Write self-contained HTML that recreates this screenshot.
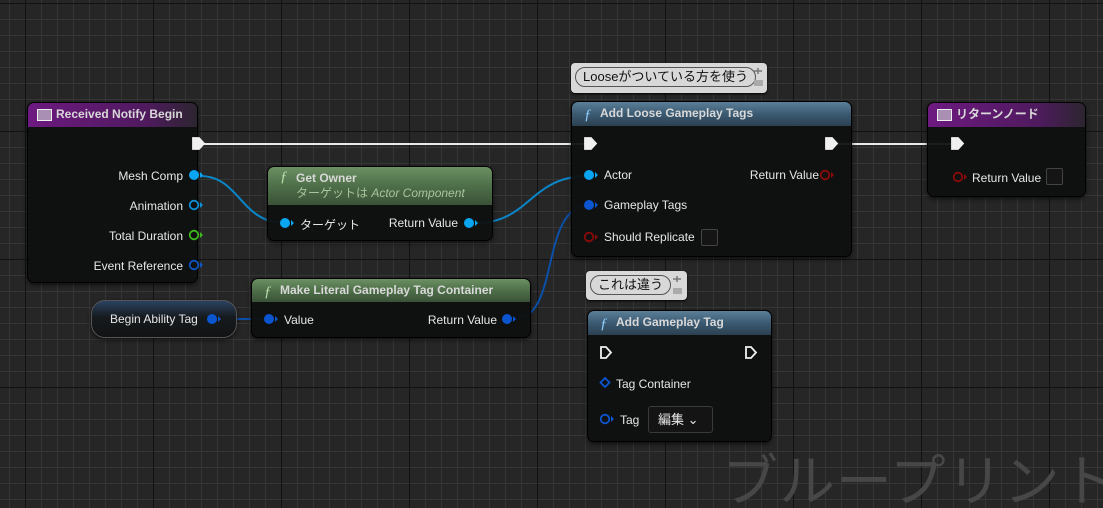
<!DOCTYPE html>
<html><head><meta charset="utf-8"><style>
*{margin:0;padding:0;box-sizing:border-box}
html{width:1103px;height:508px;overflow:hidden}
body{width:1103px;height:508px;overflow:hidden;position:relative;font-family:"Liberation Sans","Noto Sans CJK JP",sans-serif;font-size:12px;color:#e6e6e6;
background-color:#262626;
background-image:
linear-gradient(90deg,#121212 1px,transparent 1px),
linear-gradient(0deg,#121212 1px,transparent 1px),
linear-gradient(90deg,#363636 1px,transparent 1px),
linear-gradient(0deg,#363636 1px,transparent 1px);
background-size:128px 128px,128px 128px,16px 16px,16px 16px;
background-position:25px 0,0 4px,9px 0,0 4px;}
.wm{position:absolute;left:722px;top:450px;height:58px;overflow:hidden;line-height:1;font-size:56px;color:#474747;letter-spacing:1px;white-space:nowrap;font-family:"Noto Sans CJK JP",sans-serif}
.node{position:absolute;background:rgba(14,16,15,.94);border:1px solid #000;border-radius:7px;box-shadow:0 2px 4px rgba(0,0,0,.6)}
.hd{position:absolute;left:0;top:0;right:0;border-radius:6px 6px 0 0;font-weight:bold;color:#d8d8d8;padding-left:28px;white-space:nowrap}
.purple{background:linear-gradient(90deg,#6d1a80,#4f1a5e 70%,#2c2530);height:24px;line-height:23px}
.blue{background:linear-gradient(180deg,#5b7f98,#3b5a72 50%,#2b4050);height:24px;line-height:23px}
.green{background:linear-gradient(180deg,#6c8f63,#4e6f49 50%,#3a5238)}
.t{position:absolute;white-space:nowrap}
.r{text-align:right}
.sq{position:absolute;left:9px;top:6px;width:15px;height:12px;border:1.5px solid #eee;background:#a88fb3}
.f{position:absolute;left:12px;font-style:italic;font-family:"Liberation Serif",serif;font-weight:normal;font-size:15px}
.box{position:absolute;width:17px;height:17px;border:1px solid #444;border-radius:2px;background:#151515}
.bub{position:absolute;background:#d8d8d8;border-radius:4px;box-shadow:0 1px 2px #000}
.bub span{position:absolute;left:4px;top:4px;border:1px solid #555;border-radius:11px;padding:0 7px;height:20px;line-height:18px;color:#111;font-size:13px;white-space:nowrap}
svg{position:absolute;left:0;top:0}
</style></head><body>
<div class="wm">ブループリント</div>
<svg width="1103" height="508">
<g fill="none" stroke-width="2">
<path d="M203 144H585" stroke="#e8e8e8"/>
<path d="M838 144H952" stroke="#e8e8e8"/>
<path d="M200 176C240 176 240 223 285 223" stroke="#0a85c8"/>
<path d="M476 223C530 223 530 176 588 176" stroke="#0a85c8"/>
<path d="M218 319H268" stroke="#0b4fa8"/>
<path d="M515 319C560 319 540 206 588 206" stroke="#0b4fa8"/>
</g>
</svg>

<div class="node" style="left:27px;top:102px;width:171px;height:181px">
<div class="hd purple"><div class="sq"></div>Received Notify Begin</div>
<div class="t r" style="right:14px;top:66px">Mesh Comp</div>
<div class="t r" style="right:14px;top:96px">Animation</div>
<div class="t r" style="right:14px;top:126px">Total Duration</div>
<div class="t r" style="right:14px;top:156px">Event Reference</div>
</div>

<div class="node" style="left:267px;top:166px;width:226px;height:75px">
<div class="hd green" style="height:38px;padding-top:4px;line-height:15px"><span class="f" style="top:3px;color:#b6e0a8">ƒ</span>Get Owner<br><span style="font-weight:normal;color:#a7c49c">ターゲットは <i>Actor Component</i></span></div>
<div class="t" style="left:32px;top:49px">ターゲット</div>
<div class="t r" style="right:34px;top:49px">Return Value</div>
</div>

<div class="node" style="left:91px;top:300px;width:146px;height:38px;border-radius:14px;background:linear-gradient(180deg,#2a4260,#161a1e 45%,#121413);border-color:#555">
<div class="t" style="left:18px;top:11px">Begin Ability Tag</div>
</div>

<div class="node" style="left:251px;top:278px;width:280px;height:60px">
<div class="hd green" style="height:23px;line-height:22px"><span class="f" style="top:2px;color:#b6e0a8">ƒ</span>Make Literal Gameplay Tag Container</div>
<div class="t" style="left:32px;top:34px">Value</div>
<div class="t r" style="right:33px;top:34px">Return Value</div>
</div>

<div class="bub" style="left:571px;top:63px;width:196px;height:30px"><span>Looseがついている方を使う</span></div>
<div class="node" style="left:571px;top:101px;width:281px;height:156px">
<div class="hd blue"><span class="f" style="top:2px;color:#8fd0ff">ƒ</span>Add Loose Gameplay Tags</div>
<div class="t" style="left:32px;top:66px">Actor</div>
<div class="t r" style="right:32px;top:66px">Return Value</div>
<div class="t" style="left:32px;top:96px">Gameplay Tags</div>
<div class="t" style="left:32px;top:128px">Should Replicate</div>
<div class="box" style="left:129px;top:127px"></div>
</div>

<div class="node" style="left:927px;top:102px;width:159px;height:95px">
<div class="hd purple"><div class="sq"></div>リターンノード</div>
<div class="t" style="left:44px;top:68px">Return Value</div>
<div class="box" style="left:118px;top:65px"></div>
</div>

<div class="bub" style="left:586px;top:271px;width:101px;height:29px"><span>これは違う</span></div>
<div class="node" style="left:587px;top:310px;width:185px;height:132px">
<div class="hd blue"><span class="f" style="top:2px;color:#8fd0ff">ƒ</span>Add Gameplay Tag</div>
<div class="t" style="left:28px;top:66px">Tag Container</div>
<div class="t" style="left:32px;top:102px">Tag</div>
<div style="position:absolute;left:60px;top:95px;width:65px;height:27px;border:1px solid #3a3a3a;border-radius:3px;background:#141414;line-height:25px;padding-left:9px;font-size:13px">編集 ⌄</div>
</div>

<svg width="1103" height="508">
<g stroke-width="1.8">
<path d="M193 138h6l5 5.5-5 5.5h-6z" fill="#f0f0f0" stroke="#f0f0f0"/>
<path d="M585 138h6l5 5.5-5 5.5h-6z" fill="#f0f0f0" stroke="#f0f0f0"/>
<path d="M826 138h6l5 5.5-5 5.5h-6z" fill="#f0f0f0" stroke="#f0f0f0"/>
<path d="M952 138h6l5 5.5-5 5.5h-6z" fill="#f0f0f0" stroke="#f0f0f0"/>
<path d="M601 347h5l5 5.5-5 5.5h-5z" fill="none" stroke="#f0f0f0"/>
<path d="M746 347h5l5 5.5-5 5.5h-5z" fill="none" stroke="#f0f0f0"/>
<circle cx="194" cy="175" r="5" fill="#0aa5f0"/><path d="M200 172l3 3-3 3z" fill="#0aa5f0"/>
<circle cx="194" cy="205" r="4.3" fill="none" stroke="#0a8fd6"/><path d="M200 202l3 3-3 3z" fill="#0a8fd6"/>
<circle cx="194" cy="235" r="4.3" fill="none" stroke="#3db81e"/><path d="M200 232l3 3-3 3z" fill="#3db81e"/>
<circle cx="194" cy="265" r="4.3" fill="none" stroke="#0b55c0"/><path d="M200 262l3 3-3 3z" fill="#0b55c0"/>
<circle cx="285" cy="223" r="5" fill="#0aa5f0"/><path d="M291 220l3 3-3 3z" fill="#0aa5f0"/>
<circle cx="469" cy="223" r="5" fill="#0aa5f0"/><path d="M475 220l3 3-3 3z" fill="#0aa5f0"/>
<circle cx="212" cy="319" r="5" fill="#0b55d0"/><path d="M218 316l3 3-3 3z" fill="#0b55d0"/>
<circle cx="269" cy="319" r="5" fill="#0b55d0"/><path d="M275 316l3 3-3 3z" fill="#0b55d0"/>
<circle cx="507" cy="319" r="5" fill="#0b55d0"/><path d="M513 316l3 3-3 3z" fill="#0b55d0"/>
<circle cx="589" cy="175" r="5" fill="#0aa5f0"/><path d="M595 172l3 3-3 3z" fill="#0aa5f0"/>
<circle cx="589" cy="205" r="5" fill="#0b55d0"/><path d="M595 202l3 3-3 3z" fill="#0b55d0"/>
<circle cx="589" cy="237" r="4.3" fill="none" stroke="#8a0a0a"/><path d="M595 234l3 3-3 3z" fill="#8a0a0a"/>
<circle cx="825" cy="175" r="4.3" fill="none" stroke="#8a0a0a"/><path d="M831 172l3 3-3 3z" fill="#8a0a0a"/>
<circle cx="958" cy="177" r="4.3" fill="none" stroke="#8a0a0a"/><path d="M964 174l3 3-3 3z" fill="#8a0a0a"/>
<path d="M605 378l4.5 4.5-4.5 4.5-4.5-4.5z" fill="none" stroke="#0b55d0"/>
<circle cx="605" cy="419" r="4.3" fill="none" stroke="#0b55d0"/><path d="M611 416l3 3-3 3z" fill="#0b55d0"/>
<path d="M754 71h8M758 68v6" stroke="#777" stroke-width="1.5"/><rect x="754" y="80" width="9" height="6" fill="#aaa"/>
<path d="M673 279h8M677 276v6" stroke="#777" stroke-width="1.5"/><rect x="673" y="288" width="9" height="6" fill="#aaa"/>
</g>
</svg>
</body></html>
